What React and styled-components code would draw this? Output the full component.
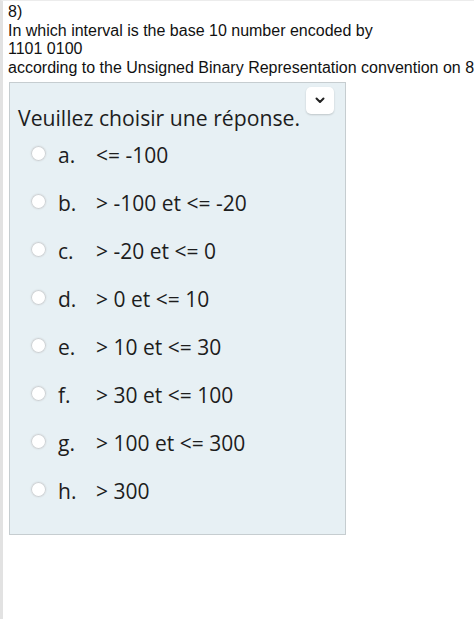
import React, { useState } from "react";
import styled, { createGlobalStyle } from "styled-components";

const GlobalStyle = createGlobalStyle`
  html, body {
    margin: 0;
    padding: 0;
    background: #ffffff;
  }
`;

const Page = styled.div`
  width: 474px;
  height: 619px;
  box-sizing: border-box;
  border-left: 3px solid #e2e2e2;
  border-top: 1px solid #ececec;
  padding: 2px 0 0 5px;
  overflow: hidden;
`;

const Question = styled.div`
  font-family: "Liberation Sans", Arial, sans-serif;
  font-size: 16px;
  line-height: 18.7px;
  color: #111;
  white-space: nowrap;
`;

const AnswerBox = styled.div`
  position: relative;
  margin-top: 4px;
  margin-left: 1px;
  width: 337px;
  height: 453px;
  box-sizing: border-box;
  background: #e7f0f4;
  border: 1px solid #c6cdd0;
  padding: 20px 0 0 8px;
`;

const Prompt = styled.div`
  font-family: "Open Sans", sans-serif;
  font-size: 21.2px;
  line-height: 30px;
  color: #1d1d1d;
`;

const Toggle = styled.button`
  position: absolute;
  top: 4px;
  right: 11px;
  width: 28px;
  height: 27px;
  border: none;
  border-radius: 5px;
  background: #fff;
  box-shadow: 0 1px 2px rgba(0, 0, 0, 0.18);
  display: flex;
  align-items: center;
  justify-content: center;
  padding: 0;
`;

const Options = styled.div`
  display: flex;
  flex-direction: column;
  gap: 20px;
  padding: 8px 0 0 13px;
`;

const Option = styled.label`
  display: flex;
  align-items: center;
  height: 28px;
  font-family: "Open Sans", sans-serif;
  font-size: 21px;
  color: #1d1d1d;
  cursor: pointer;
`;

const Radio = styled.span`
  width: 15px;
  height: 15px;
  border-radius: 50%;
  background: #fff;
  box-shadow: inset 0 0 0 1px #cdd2d5, 0 0 2px rgba(0, 0, 0, 0.12);
  margin-right: 12px;
  margin-top: -2px;
  flex-shrink: 0;
`;

const Letter = styled.span`
  width: 38px;
`;

const options = [
  ["a.", "<= -100"],
  ["b.", "> -100 et <= -20"],
  ["c.", "> -20 et <= 0"],
  ["d.", "> 0 et <= 10"],
  ["e.", "> 10 et <= 30"],
  ["f.", "> 30 et <= 100"],
  ["g.", "> 100 et <= 300"],
  ["h.", "> 300"],
];

export default function App() {
  const [picked, setPicked] = useState(null);

  return (
    <>
      <GlobalStyle />
      <Page>
        <Question>
          8)
          <br />
          In which interval is the base 10 number encoded by
          <br />
          1101 0100
          <br />
          according to the Unsigned Binary Representation convention on 8 bits?
        </Question>
        <AnswerBox>
          <Toggle>
            <svg width="10" height="7" viewBox="0 0 10 7">
              <path d="M1.5 1.5 L5 5 L8.5 1.5" fill="none" stroke="#222" strokeWidth="2" strokeLinecap="round" strokeLinejoin="round" />
            </svg>
          </Toggle>
          <Prompt>Veuillez choisir une réponse.</Prompt>
          <Options>
            {options.map(([letter, text]) => (
              <Option key={letter} onClick={() => setPicked(letter)}>
                <Radio />
                <Letter>{letter}</Letter>
                <span>{text}</span>
              </Option>
            ))}
          </Options>
        </AnswerBox>
      </Page>
    </>
  );
}
